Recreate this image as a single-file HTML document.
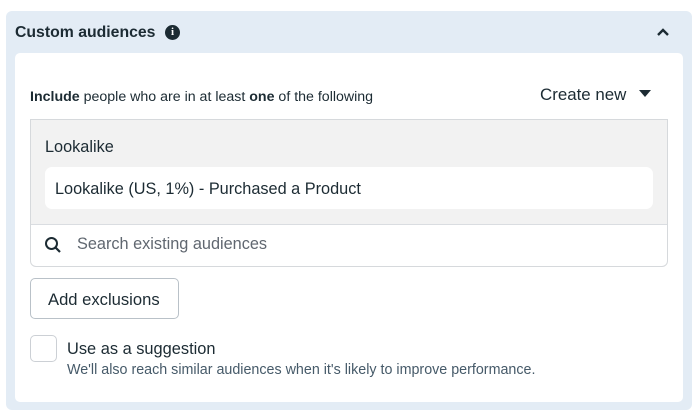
<!DOCTYPE html>
<html><head><style>
body{margin:0;width:700px;height:419px;background:#fff;font-family:"Liberation Sans",sans-serif;color:#1c2b33;position:relative;overflow:hidden}
.a{position:absolute}
</style></head><body>
<div class="a" style="left:6px;top:11px;width:686px;height:399px;background:#e3ecf5;border-radius:6px"></div>
<div class="a" style="left:15px;top:24px;font-size:15.8px;font-weight:bold;color:#1c2b33">Custom audiences</div>
<div class="a" style="left:165px;top:25px;width:15px;height:15px;border-radius:50%;background:#1c2b33;color:#fff;font-size:11px;font-weight:bold;text-align:center;line-height:15px;font-family:'Liberation Serif',serif">i</div>
<svg class="a" style="left:656px;top:27px" width="14" height="10" viewBox="0 0 14 10"><path d="M2 8 L7 3 L12 8" fill="none" stroke="#1c2b33" stroke-width="2.4"/></svg>
<div class="a" style="left:15px;top:53px;width:668px;height:349px;background:#fff;border-radius:5px"></div>
<div class="a" style="left:30px;top:89px;font-size:14.2px"><b>Include</b> people who are in at least <b>one</b> of the following</div>
<div class="a" style="left:540px;top:85px;font-size:16.9px">Create new</div>
<svg class="a" style="left:639px;top:90px" width="12" height="8"><path d="M0 0 L12 0 L6 7Z" fill="#1c2b33"/></svg>
<div class="a" style="left:30px;top:119px;width:636px;height:146px;border:1px solid #d6d9dc;border-radius:0 0 6px 6px;background:#fff"></div>
<div class="a" style="left:31px;top:120px;width:636px;height:104px;background:#f2f2f2;border-bottom:1px solid #dadde1"></div>
<div class="a" style="left:45px;top:138px;font-size:16.3px">Lookalike</div>
<div class="a" style="left:45px;top:167px;width:608px;height:42px;background:#fff;border-radius:7px"></div>
<div class="a" style="left:55px;top:180px;font-size:16.3px">Lookalike (US, 1%) - Purchased a Product</div>
<svg class="a" style="left:44px;top:236px" width="18" height="18" viewBox="0 0 18 18"><circle cx="7.5" cy="7.5" r="5.5" fill="none" stroke="#1c2b33" stroke-width="2"/><path d="M11.5 11.5 L16 16" stroke="#1c2b33" stroke-width="2.2"/></svg>
<div class="a" style="left:77px;top:235px;font-size:16.3px;color:#606770">Search existing audiences</div>
<div class="a" style="left:30px;top:278px;width:149px;height:41px;border:1px solid #b9c1c8;border-radius:5px;box-sizing:border-box"></div>
<div class="a" style="left:48px;top:290px;font-size:16.6px">Add exclusions</div>
<div class="a" style="left:30px;top:335px;width:27px;height:27px;border:1px solid #ccd0d5;border-radius:5px;box-sizing:border-box"></div>
<div class="a" style="left:67px;top:340px;font-size:16.4px">Use as a suggestion</div>
<div class="a" style="left:67px;top:362px;font-size:14.3px;color:#465a69">We'll also reach similar audiences when it's likely to improve performance.</div>
</body></html>
